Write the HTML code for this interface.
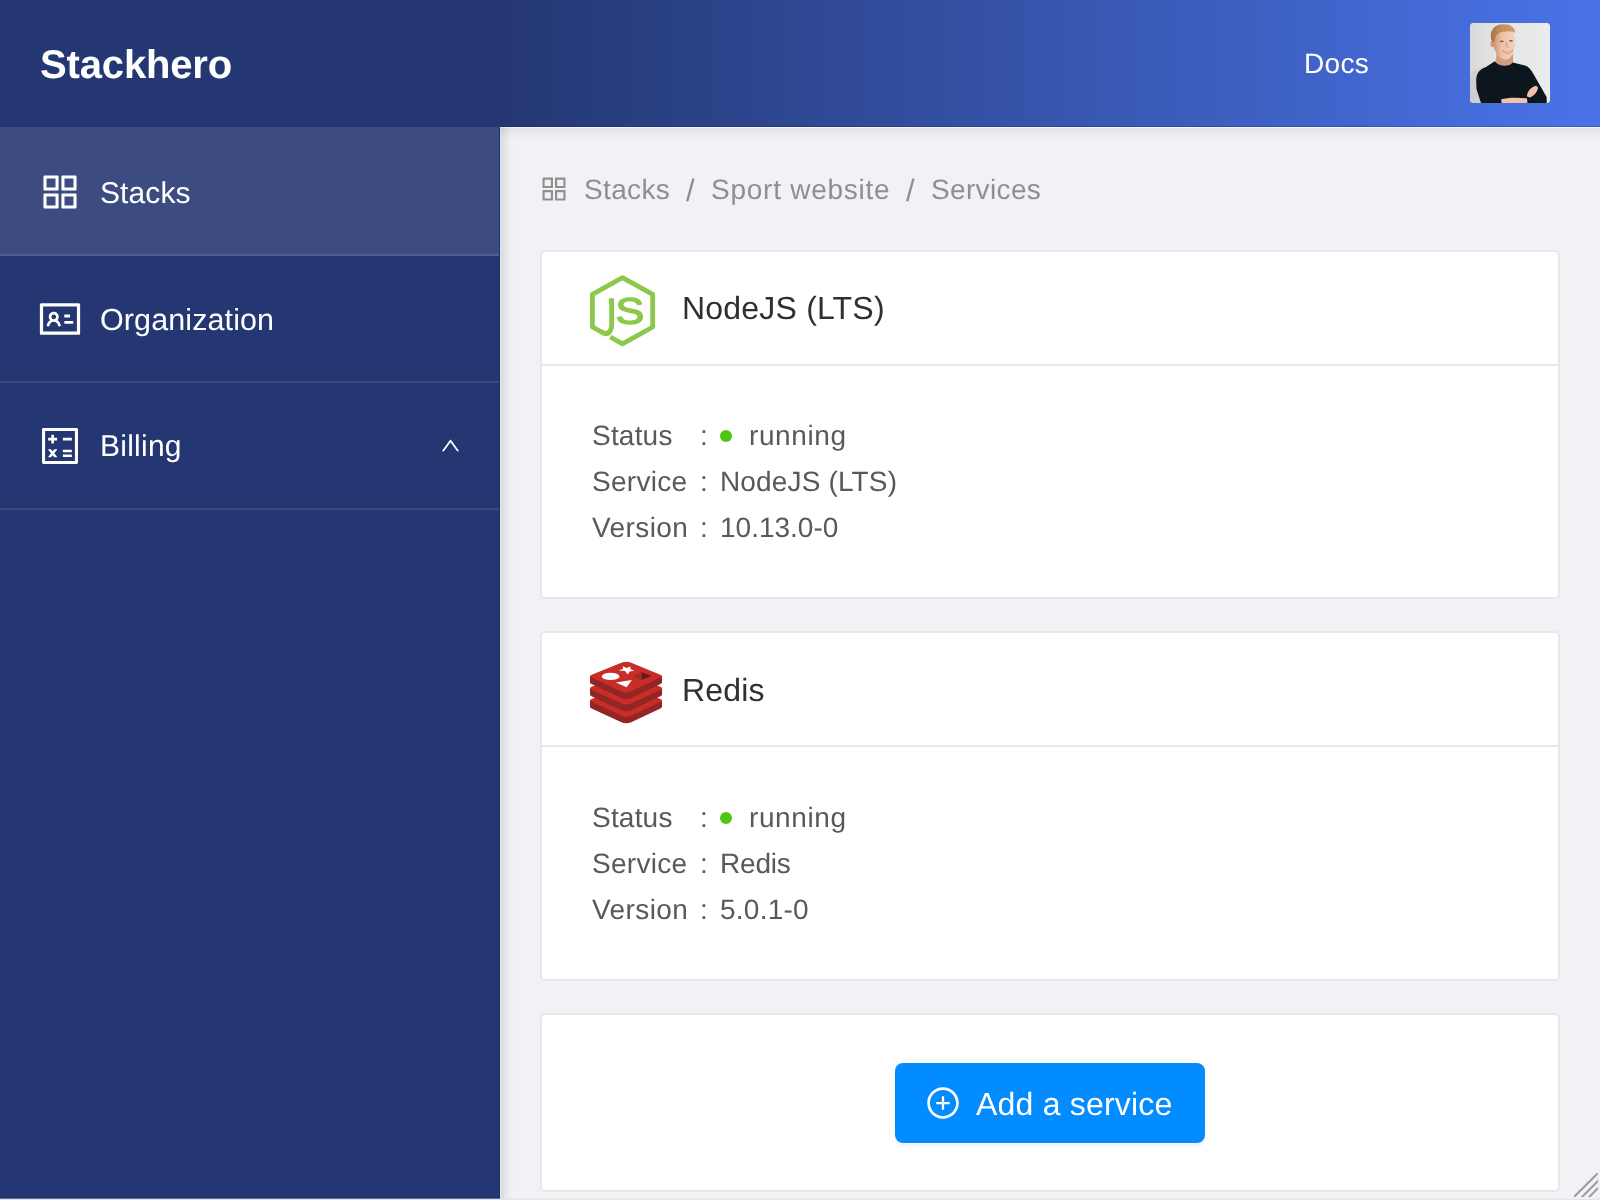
<!DOCTYPE html>
<html lang="en">
<head>
<meta charset="utf-8">
<title>Stackhero</title>
<style>
*{box-sizing:border-box;margin:0;padding:0}
html,body{width:1600px;height:1200px;background:#f0f2f5}
body{overflow:hidden}
body{position:relative;font-family:"Liberation Sans",Arial,sans-serif;color:#595959}
.abs{position:absolute}
.t{position:absolute;white-space:nowrap;line-height:1;will-change:transform;-webkit-font-smoothing:antialiased;text-rendering:geometricPrecision}
svg{display:block;position:absolute;overflow:visible}
header,aside,main,nav,section,footer{display:block;position:static;margin:0;padding:0}
/* if rendered in an 800x600 CSS viewport at 2x density, shrink layout so device pixels still match */
@media (max-width:1200px){html{zoom:.5}}

/* content background + edge shadows cast by header and sider */
.content{position:absolute;left:500px;top:127px;width:1100px;height:1073px;background:#f0f2f5}
.sh-top{position:absolute;left:500px;top:127px;width:1100px;height:14px;
  background:linear-gradient(180deg,rgba(255,255,250,.25) 0,rgba(255,255,250,.25) 1px,rgba(0,0,0,.066) 1.2px,rgba(0,0,0,.052) 3px,rgba(0,0,0,.031) 6px,rgba(0,0,0,.013) 9px,rgba(0,0,0,.003) 12px,rgba(0,0,0,0) 14px)}
.sh-left{position:absolute;left:500px;top:127px;width:15px;height:1073px;
  background:linear-gradient(90deg,rgba(0,0,0,.045) 0,rgba(0,0,0,.045) 1px,rgba(0,0,0,.098) 1.2px,rgba(0,0,0,.075) 3px,rgba(0,0,0,.048) 6px,rgba(0,0,0,.02) 9px,rgba(0,0,0,.007) 12px,rgba(0,0,0,0) 15px)}
.sider-edge{position:absolute;left:499px;top:127px;width:1px;height:1073px;background:#1b2f6c}
.bottom-line{position:absolute;left:0;top:1199px;width:1600px;height:1px;background:#e4e5e7}
.bottom-line2{position:absolute;left:0;top:1198px;width:1600px;height:1px;background:rgba(228,229,231,.3)}

/* header */
.header{position:absolute;left:0;top:0;width:1600px;height:127px;
  background:linear-gradient(90deg,#243772 0,#243772 500px,#4a73e8 1600px)}
.header-line{position:absolute;left:500px;top:126px;width:1100px;height:1px;background:rgba(10,20,80,.25)}
.brand{font-size:40px;font-weight:bold;color:#fff}
.docs{font-size:28px;color:#fff}
.avatar{left:1470px;top:23px;width:80px;height:80px;border-radius:4px;overflow:hidden;background:#e6e6e6}

/* sider */
.sider{position:absolute;left:0;top:127px;width:500px;height:1073px;background:#243772}
.sel{position:absolute;left:0;top:127px;width:499px;height:127px;background:#3c4c81}
.sep{position:absolute;left:0;width:500px;height:2px;background:#3a4b80}
.mi{font-size:30px;color:#fff}

/* cards */
.bc{font-size:28px;color:#8f8f8f}
.card{position:absolute;left:540px;width:1020px;background:#fff;border:2px solid #e8e8e8;border-radius:5px}
.div{position:absolute;left:542px;width:1016px;height:2px;background:#e8e8e8}
.title{font-size:32px;color:#303030}
.row{font-size:28px;color:#595959}
.dot{position:absolute;width:12px;height:12px;border-radius:50%;background:#4ec413}
.btn{position:absolute;left:895px;top:1063px;width:310px;height:80px;border-radius:8px;background:#038cff;
  box-shadow:0 4px 0 rgba(0,0,0,.035)}
.btn .t{color:#fff;font-size:32px}
</style>
</head>
<body>


<div class="content"></div>
<div class="sh-top"></div>
<div class="sh-left"></div>

<header>
<div class="header"></div>
<div class="header-line"></div>
<div class="t brand" style="left:40px;top:44.5px;letter-spacing:-.15px">Stackhero</div>
<div class="t docs" style="left:1304px;top:50px;letter-spacing:.35px">Docs</div>
<div class="abs avatar"><svg viewBox="0 0 80 80" width="80" height="80" style="left:0;top:0">
<defs>
<linearGradient id="avbg" x1="0" y1="0" x2="1" y2="0"><stop offset="0" stop-color="#d9d9d9"/><stop offset=".3" stop-color="#e3e3e3"/><stop offset="1" stop-color="#ececec"/></linearGradient>
<linearGradient id="avskin" x1="0" y1="0" x2="1" y2="0"><stop offset="0" stop-color="#c98f70"/><stop offset=".4" stop-color="#edc1a7"/><stop offset="1" stop-color="#f4d2bd"/></linearGradient>
<linearGradient id="avhair" x1="0" y1="0" x2="1" y2="0"><stop offset="0" stop-color="#a9744a"/><stop offset=".5" stop-color="#c8915f"/><stop offset="1" stop-color="#cf9c6c"/></linearGradient>
<filter id="avblur" x="-10%" y="-10%" width="120%" height="120%"><feGaussianBlur stdDeviation=".6"/></filter>
</defs>
<rect width="80" height="80" fill="url(#avbg)"/>
<g filter="url(#avblur)">
<path d="M0,52 C3,48 8,46 14,44 L14,80 L0,80Z" fill="#c4c4c4" opacity=".55"/>
<path d="M26.5,30 L43,30 L43,43 L34,45.5 L25.5,40Z" fill="#d29c7e"/>
<path d="M6.2,58 C6.2,50 9.5,46.5 16,44 L24.8,38.2 C27,41.2 31,42.8 34.8,42.8 C38.2,42.8 40.8,41.8 42.6,39.6 L55,42.4 C59,43.6 61.5,47 64,52 L76.6,74 L76.8,80 L11,80 L6.5,66Z" fill="#11131b"/>
<path d="M31,76.6 C36,74.6 46,74.2 57,75.3 L57.4,80 L31.8,80Z" fill="#efc4aa"/>
<path d="M57,73.5 C57,69 60.5,64.6 65,63.1 C67.4,62.6 68.4,64 67.7,66.2 C66.8,69.2 64.4,72.6 60.2,74.4Z" fill="#efc2a8"/>
<ellipse cx="22.4" cy="21" rx="1.9" ry="3.2" fill="#d39b7b"/>
<path d="M22.6,16 C22.6,9 27.5,6.3 34.3,6.3 C41,6.3 45.2,10 45.2,17 C45.2,25 43.6,31 40.2,34.5 C37.6,37.2 33.4,37.4 30.4,34.8 C25.8,31 22.6,24 22.6,16Z" fill="url(#avskin)"/>
<path d="M20.8,14 C20.2,7 24.6,1.5 33,1.3 C40.6,1.1 45.5,4.4 45.2,10.6 C44,8.9 41,8.2 37,8.4 C32,8.6 28.6,9.3 26.6,11.9 C25.1,14 24.7,16.6 24.3,19.2 L22.3,19 C21.5,17.6 21,16 20.8,14Z" fill="url(#avhair)"/>
<ellipse cx="31.8" cy="18.3" rx="2" ry=".85" fill="#86604d"/>
<ellipse cx="41" cy="17.8" rx="1.9" ry=".85" fill="#86604d"/>
<path d="M36.6,19.5 C36.3,22.4 36.6,24 38.6,24.6" stroke="#cf8f78" stroke-width="1" fill="none"/>
<path d="M32.6,27.6 C35,30 40.4,29.8 42.8,26.8 C41,31.3 35.2,32 32.6,27.6Z" fill="#fbeae3" stroke="#d08572" stroke-width=".8"/>
</g>
</svg></div>
</header>

<aside>
<nav>
<div class="sider"></div>
<div class="sel"></div>
<div class="sep" style="top:254px;background:#516090;width:499px"></div>
<div class="sep" style="top:381px"></div>
<div class="sep" style="top:508px"></div>
<svg viewBox="0 0 1024 1024" width="46" height="46" style="left:36.7px;top:168.5px" fill="#fff"><path d="M464 144H160c-8.800 0-16 7.200-16 16v304c0 8.800 7.200 16 16 16h304c8.800 0 16-7.200 16-16V160c0-8.800-7.200-16-16-16zm-52 268H212V212h200v200zm452-268H560c-8.800 0-16 7.200-16 16v304c0 8.800 7.200 16 16 16h304c8.800 0 16-7.200 16-16V160c0-8.800-7.200-16-16-16zm-52 268H612V212h200v200zM464 544H160c-8.800 0-16 7.200-16 16v304c0 8.800 7.200 16 16 16h304c8.800 0 16-7.200 16-16V560c0-8.800-7.200-16-16-16zm-52 268H212V612h200v200zm452-268H560c-8.800 0-16 7.200-16 16v304c0 8.800 7.200 16 16 16h304c8.800 0 16-7.200 16-16V560c0-8.800-7.200-16-16-16zm-52 268H612V612h200v200z"/></svg>
<div class="t mi" style="left:100px;top:179px;letter-spacing:.1px">Stacks</div>
<svg viewBox="0 0 1024 1024" width="46" height="46" style="left:36.7px;top:296.1px" fill="#fff"><path d="M928 160H96c-17.700 0-32 14.300-32 32v640c0 17.700 14.300 32 32 32h832c17.700 0 32-14.300 32-32V192c0-17.700-14.300-32-32-32zm-40 632H136V232h752v560zM610.300 476h123.400c1.300 0 2.300-3.600 2.300-8v-48c0-4.400-1-8-2.300-8H610.300c-1.300 0-2.300 3.600-2.300 8v48c0 4.400 1 8 2.300 8zm4.800 144h185.700c3.900 0 7.100-3.600 7.100-8v-48c0-4.400-3.200-8-7.100-8H615.100c-3.900 0-7.100 3.600-7.100 8v48c0 4.400 3.200 8 7.100 8zM224 673h43.900c4.200 0 7.600-3.300 7.900-7.500 3.800-50.500 46-90.500 97.200-90.500s93.400 40 97.200 90.500c.3 4.200 3.700 7.500 7.900 7.500H522c4.600 0 8.200-3.800 8-8.400-2.800-53.300-32-99.700-74.600-126.100 18.100-19.900 29.100-46.400 29.100-75.500 0-61.900-49.900-112-111.400-112s-111.400 50.100-111.400 112c0 29.100 11 55.500 29.100 75.500-42.700 26.500-71.800 72.800-74.600 126.100-.4 4.600 3.200 8.400 7.800 8.400zm149-262c28.500 0 51.700 23.300 51.700 52s-23.200 52-51.700 52-51.700-23.300-51.700-52 23.200-52 51.700-52z"/></svg>
<div class="t mi" style="left:100px;top:304.5px;font-size:30.5px;letter-spacing:.1px">Organization</div>
<svg viewBox="0 0 1024 1024" width="46" height="46" style="left:36.7px;top:423px" fill="#fff"><path d="M251.200 387H320v68.800c0 1.800 1.800 3.200 4 3.200h48c2.200 0 4-1.400 4-3.300V387h68.800c1.800 0 3.200-1.800 3.200-4v-48c0-2.200-1.400-4-3.300-4H376v-68.800c0-1.800-1.800-3.200-4-3.200h-48c-2.200 0-4 1.400-4 3.200V331h-68.800c-1.800 0-3.200 1.800-3.200 4v48c0 2.200 1.400 4 3.200 4zm328 0h193.600c1.800 0 3.200-1.800 3.200-4v-48c0-2.200-1.400-4-3.300-4H579.200c-1.800 0-3.200 1.800-3.200 4v48c0 2.200 1.400 4 3.200 4zm0 265h193.600c1.800 0 3.200-1.800 3.200-4v-48c0-2.200-1.400-4-3.300-4H579.200c-1.800 0-3.200 1.800-3.200 4v48c0 2.200 1.400 4 3.200 4zm0 104h193.600c1.800 0 3.200-1.800 3.200-4v-48c0-2.200-1.400-4-3.300-4H579.200c-1.800 0-3.200 1.800-3.200 4v48c0 2.200 1.400 4 3.200 4zm-195.700-81l61.200-74.900c4.300-5.200.7-13.100-5.900-13.100H388c-2.300 0-4.500 1-5.900 2.900l-34 41.600-34-41.600a7.850 7.850 0 0 0-5.900-2.900h-50.900c-6.600 0-10.200 7.900-5.900 13.100l61.200 74.900-62.700 76.800c-4.400 5.200-.8 13.100 5.800 13.100h50.800c2.300 0 4.500-1 5.900-2.900l35.500-43.500 35.500 43.500c1.500 1.800 3.700 2.900 5.900 2.900h50.800c6.600 0 10.200-7.900 5.900-13.100L383.500 675zM880 112H144c-17.700 0-32 14.300-32 32v736c0 17.700 14.300 32 32 32h736c17.700 0 32-14.300 32-32V144c0-17.700-14.300-32-32-32zm-36 732H180V180h664v664z"/></svg>
<div class="t mi" style="left:100px;top:432px;letter-spacing:.25px">Billing</div>
<svg viewBox="0 0 1024 1024" width="23" height="23" style="left:438.5px;top:434px" fill="#fff"><path d="M890.500 755.300L537.900 269.200c-12.800-17.600-39-17.600-51.700 0L133.500 755.300A8 8 0 0 0 140 768h75c5.100 0 9.900-2.500 12.900-6.600L512 369.800l284.100 391.600c3 4.100 7.800 6.600 12.900 6.600h75c6.500 0 10.300-7.400 6.500-12.700z"/></svg>
</nav>
</aside>

<main>
<nav class="breadcrumb">
<svg viewBox="0 0 1024 1024" width="32" height="32" style="left:538px;top:173px" fill="#8f8f8f"><path d="M464 144H160c-8.800 0-16 7.200-16 16v304c0 8.800 7.200 16 16 16h304c8.800 0 16-7.200 16-16V160c0-8.800-7.200-16-16-16zm-52 268H212V212h200v200zm452-268H560c-8.800 0-16 7.200-16 16v304c0 8.800 7.200 16 16 16h304c8.800 0 16-7.200 16-16V160c0-8.800-7.200-16-16-16zm-52 268H612V212h200v200zM464 544H160c-8.800 0-16 7.200-16 16v304c0 8.800 7.200 16 16 16h304c8.800 0 16-7.200 16-16V560c0-8.800-7.200-16-16-16zm-52 268H212V612h200v200zm452-268H560c-8.800 0-16 7.200-16 16v304c0 8.800 7.200 16 16 16h304c8.800 0 16-7.200 16-16V560c0-8.800-7.200-16-16-16zm-52 268H612V612h200v200z"/></svg>
<div class="t bc" style="left:584px;top:176px;letter-spacing:.35px">Stacks</div>
<div class="t bc" style="left:686px;top:174.5px;font-size:31px">/</div>
<div class="t bc" style="left:711px;top:176px;letter-spacing:.75px">Sport website</div>
<div class="t bc" style="left:906px;top:174.5px;font-size:31px">/</div>
<div class="t bc" style="left:931px;top:176px;letter-spacing:.35px">Services</div>
</nav>

<section>
<div class="card" style="top:250px;height:349px"></div>
<div class="div" style="top:363.5px"></div>
<svg id="nodelogo" viewBox="0 0 65 71" width="65" height="71" style="left:590px;top:275px;will-change:transform">
<clipPath id="jclip"><path d="M18.95,0 H30 V71 H13.4 V48 H18.95Z"/></clipPath>
<path fill="none" stroke="#8cc84b" stroke-width="4.8" stroke-linejoin="round" d="M20.2,62 L32.5,68.8 L62.7,52 L62.7,19.4 L32.5,2.7 L2.4,19.4 L2.4,52 L14.4,58.65"/>
<g clip-path="url(#jclip)"><text transform="translate(6.75,59.6) scale(1,1.3)" font-family="Liberation Sans, Arial, sans-serif" font-size="39.5" fill="#8cc84b" stroke="#8cc84b" stroke-width="1" stroke-linejoin="round">J</text></g>
<text transform="translate(25.6,49.1) scale(1.18,1)" font-family="Liberation Sans, Arial, sans-serif" font-size="36.5" fill="#8cc84b" stroke="#8cc84b" stroke-width="1.4" stroke-linejoin="round">S</text>
</svg>
<div class="t title" style="left:682px;top:292px;letter-spacing:.2px">NodeJS (LTS)</div>
<div class="t row" style="left:592px;top:422px;letter-spacing:0.2px">Status</div>
<div class="t row" style="left:700px;top:422px">:</div>
<div class="dot" style="left:720px;top:430px"></div>
<div class="t row" style="left:749px;top:422px;letter-spacing:0.6px">running</div>
<div class="t row" style="left:592px;top:468px;letter-spacing:0.3px">Service</div>
<div class="t row" style="left:700px;top:468px">:</div>
<div class="t row" style="left:720px;top:468px;letter-spacing:0.15px">NodeJS (LTS)</div>
<div class="t row" style="left:592px;top:514px;letter-spacing:0.4px">Version</div>
<div class="t row" style="left:700px;top:514px">:</div>
<div class="t row" style="left:720px;top:514px">10.13.0-0</div>
</section>

<section>
<div class="card" style="top:631px;height:350px"></div>
<div class="div" style="top:745px"></div>
<svg id="redislogo" viewBox="0 0 72 62" width="72" height="62" style="left:590px;top:662px">
<path d="M30.74,31.85 Q36.30,29.60 41.85,31.88 L70.36,43.57 Q73.60,44.90 70.44,46.40 L41.72,60.03 Q36.30,62.60 30.86,60.06 L1.57,46.38 Q-1.60,44.90 1.65,43.59Z" fill="#932625"/>
<rect x="0.00" y="38.34" width="72.00" height="6.60" fill="#932625"/>
<path d="M30.74,25.25 Q36.30,23.00 41.85,25.28 L70.36,36.97 Q73.60,38.30 70.44,39.80 L41.72,53.43 Q36.30,56.00 30.86,53.46 L1.57,39.78 Q-1.60,38.30 1.65,36.99Z" fill="#c82d27"/>
<path d="M30.74,19.70 Q36.30,17.45 41.85,19.73 L70.36,31.42 Q73.60,32.75 70.44,34.25 L41.72,47.88 Q36.30,50.45 30.86,47.91 L1.57,34.23 Q-1.60,32.75 1.65,31.44Z" fill="#932625"/>
<rect x="0.00" y="26.19" width="72.00" height="6.60" fill="#932625"/>
<path d="M30.74,13.10 Q36.30,10.85 41.85,13.13 L70.36,24.82 Q73.60,26.15 70.44,27.65 L41.72,41.28 Q36.30,43.85 30.86,41.31 L1.57,27.63 Q-1.60,26.15 1.65,24.84Z" fill="#c82d27"/>
<path d="M30.74,7.55 Q36.30,5.30 41.85,7.58 L70.36,19.27 Q73.60,20.60 70.44,22.10 L41.72,35.73 Q36.30,38.30 30.86,35.76 L1.57,22.08 Q-1.60,20.60 1.65,19.29Z" fill="#932625"/>
<rect x="0.00" y="14.04" width="72.00" height="6.60" fill="#932625"/>
<path d="M30.74,0.95 Q36.30,-1.30 41.85,0.98 L70.36,12.67 Q73.60,14.00 70.44,15.50 L41.72,29.13 Q36.30,31.70 30.86,29.16 L1.57,15.48 Q-1.60,14.00 1.65,12.69Z" fill="#c82d27"/>
<ellipse cx="20.6" cy="14.4" rx="8.8" ry="3.6" fill="#fff"/>
<path d="M32.8,4.2 L36.6,5.9 L40.3,4.4 L40.5,7.2 L44.6,8.6 L39.7,9.4 L37.8,12.6 L34.9,9.1 L28.5,8.4 L33,7.1Z" fill="#fff"/>
<path d="M25.9,20.5 L41.9,18 L36.6,25.2Z" fill="#fff"/>
<path d="M42.2,14.6 L51.9,10.2 L61.3,13.9 L51.9,18Z" fill="#a02a27"/>
<path d="M51.9,10.2 L61.3,13.9 L51.9,17.6Z" fill="#641a1b"/>
</svg>
<div class="t title" style="left:682px;top:674px;letter-spacing:.2px">Redis</div>
<div class="t row" style="left:592px;top:804px;letter-spacing:0.2px">Status</div>
<div class="t row" style="left:700px;top:804px">:</div>
<div class="dot" style="left:720px;top:812px"></div>
<div class="t row" style="left:749px;top:804px;letter-spacing:0.6px">running</div>
<div class="t row" style="left:592px;top:850px;letter-spacing:0.3px">Service</div>
<div class="t row" style="left:700px;top:850px">:</div>
<div class="t row" style="left:720px;top:850px;letter-spacing:-0.2px">Redis</div>
<div class="t row" style="left:592px;top:896px;letter-spacing:0.4px">Version</div>
<div class="t row" style="left:700px;top:896px">:</div>
<div class="t row" style="left:720px;top:896px;letter-spacing:0.25px">5.0.1-0</div>
</section>

<section>
<div class="card" style="top:1013px;height:179px"></div>
<div class="btn"><svg viewBox="0 0 1024 1024" width="36" height="36" style="left:30px;top:22px" fill="#fff"><path d="M696 480H544V328c0-4.400-3.600-8-8-8h-48c-4.400 0-8 3.600-8 8v152H328c-4.400 0-8 3.600-8 8v48c0 4.400 3.600 8 8 8h152v152c0 4.400 3.600 8 8 8h48c4.400 0 8-3.600 8-8V544h152c4.400 0 8-3.600 8-8v-48c0-4.400-3.600-8-8-8zM512 64C264.600 64 64 264.600 64 512s200.600 448 448 448 448-200.600 448-448S759.400 64 512 64zm0 820c-205.400 0-372-166.600-372-372s166.600-372 372-372 372 166.600 372 372-166.600 372-372 372z"/></svg><div class="t" style="left:81px;top:25px;letter-spacing:.2px">Add a service</div></div>
</section>
</main>

<svg viewBox="0 0 24 24" width="24" height="24" style="left:1574px;top:1173px;overflow:hidden" stroke="#9c9c9c" stroke-width="2" fill="none">
<path d="M-1,25 L25,-1 M7,25 L25,7 M14.2,25 L25,14.2"/>
</svg>
<div class="sider-edge"></div>
<div class="bottom-line2"></div>
<div class="bottom-line"></div>

</body>
</html>
